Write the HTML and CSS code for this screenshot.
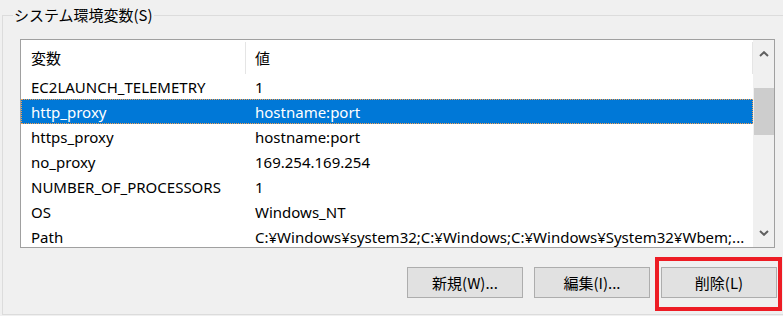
FILE: index.html
```html
<!DOCTYPE html>
<html lang="ja">
<head>
  <meta charset="UTF-8">
  <meta name="viewport" content="width=device-width, initial-scale=1.0">
  <title>システム環境変数</title>
  <link rel="stylesheet" href="styles.css">
</head>
<body>
  <fieldset class="group">
    <legend>システム環境変数(S)</legend>

    <div class="listbox">
      <div class="list">
        <div class="list-header">
          <div class="col-name">変数</div>
          <div class="col-value">値</div>
        </div>
        <div class="list-body">
          <div class="row">
            <div class="col-name">EC2LAUNCH_TELEMETRY</div>
            <div class="col-value">1</div>
          </div>
          <div class="row selected">
            <div class="col-name">http_proxy</div>
            <div class="col-value">hostname:port</div>
          </div>
          <div class="row">
            <div class="col-name">https_proxy</div>
            <div class="col-value">hostname:port</div>
          </div>
          <div class="row">
            <div class="col-name">no_proxy</div>
            <div class="col-value">169.254.169.254</div>
          </div>
          <div class="row">
            <div class="col-name">NUMBER_OF_PROCESSORS</div>
            <div class="col-value">1</div>
          </div>
          <div class="row">
            <div class="col-name">OS</div>
            <div class="col-value">Windows_NT</div>
          </div>
          <div class="row">
            <div class="col-name">Path</div>
            <div class="col-value">C:¥Windows¥system32;C:¥Windows;C:¥Windows¥System32¥Wbem;...</div>
          </div>
        </div>
      </div>
      <div class="scrollbar">
        <div class="scroll-btn">
          <svg width="10" height="6" viewBox="0 0 10 6"><polyline points="1,5 5,1.2 9,5" fill="none" stroke="#606060" stroke-width="2"/></svg>
        </div>
        <div class="scroll-track">
          <div class="scroll-thumb"></div>
        </div>
        <div class="scroll-btn">
          <svg width="10" height="6" viewBox="0 0 10 6"><polyline points="1,1 5,4.8 9,1" fill="none" stroke="#606060" stroke-width="2"/></svg>
        </div>
      </div>
    </div>

    <div class="buttons">
      <button type="button">新規(W)...</button>
      <button type="button">編集(I)...</button>
      <span class="marked"><button type="button">削除(L)</button></span>
    </div>
  </fieldset>
</body>
</html>
```

FILE: styles.css
```css
* {
  box-sizing: border-box;
}

body {
  margin: 0;
  height: 316px;
  overflow: hidden;
  background-color: #f0f0f0;
  font-family: "Noto Sans", "Noto Sans CJK JP", sans-serif;
  font-size: 15px;
  color: #000;
}

.group {
  margin: 5px 0 0 2px;
  padding: 14px 6px 16px 17px;
  border: 1px solid #dcdcdc;
  border-right: none;
  min-width: 0;
}

.group legend {
  margin-left: -7px;
  padding: 0 1px;
  line-height: 20px;
  font-family: "Noto Sans CJK JP", sans-serif;
  font-size: 15px;
}

.listbox {
  display: flex;
  height: 209px;
  margin-right: 2px;
  border: 1px solid #a0a0a0;
  background-color: #fff;
}

.list {
  flex: 1;
  min-width: 0;
  display: flex;
  flex-direction: column;
}

.list-header {
  display: flex;
  height: 34px;
  padding-top: 2px;
  flex-shrink: 0;
}

.list-header .col-name,
.list-header .col-value {
  display: flex;
  align-items: center;
  font-family: "Noto Sans CJK JP", sans-serif;
  border-right: 1px solid #e5e5e5;
  padding-bottom: 2px;
}

.list-body {
  flex: 1;
  overflow: hidden;
}

.row {
  display: flex;
  height: 25px;
  align-items: center;
}

.col-name {
  width: 225px;
  flex-shrink: 0;
  padding-left: 10px;
  white-space: nowrap;
}

.col-value {
  flex: 1;
  min-width: 0;
  padding-left: 9px;
  white-space: nowrap;
  overflow: hidden;
}

.row.selected {
  background-color: #0078d7;
  color: #fff;
  outline: 1px dotted #f5a050;
  outline-offset: -1px;
}

.scrollbar {
  width: 21px;
  display: flex;
  flex-direction: column;
  background-color: #f0f0f0;
}

.scroll-btn {
  height: 28px;
  display: flex;
  align-items: center;
  justify-content: center;
}

.scroll-track {
  flex: 1;
  padding: 20px 0 0 1px;
}

.scroll-thumb {
  width: 20px;
  height: 47px;
  background-color: #cdcdcd;
}

.buttons {
  display: flex;
  justify-content: flex-end;
  gap: 11px;
  margin-top: 19px;
}

button {
  width: 116px;
  height: 31px;
  padding: 0;
  background-color: #e1e1e1;
  border: 1px solid #adadad;
  font-family: "Noto Sans CJK JP", sans-serif;
  font-size: 15px;
  color: #000;
}

.marked {
  position: relative;
  display: flex;
}

.marked::after {
  content: "";
  position: absolute;
  top: -10px;
  right: -5px;
  bottom: -13px;
  left: -6px;
  border: 4px solid #ed1c24;
  pointer-events: none;
}
```
